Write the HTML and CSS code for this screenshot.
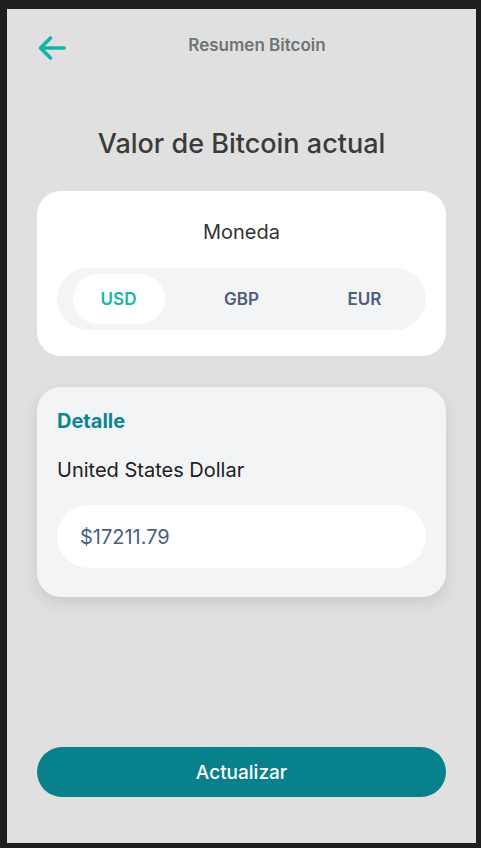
FILE: index.html
```html
<!DOCTYPE html>
<html lang="es">
<head>
	<meta charset="utf-8">
	<title>Resumen Bitcoin</title>
	<link rel="stylesheet" href="styles.css">
</head>
<body>
	<div class="screen">
		<header class="topbar">
			<a class="back" href="#" aria-label="Volver">
				<svg width="28" height="26" viewBox="0 0 28 26" fill="none" stroke="currentColor" stroke-width="3.6" stroke-linecap="round" stroke-linejoin="round">
					<path d="M26 13H3"/>
					<path d="M12.5 3L2.5 13l10 10"/>
				</svg>
			</a>
			<div class="topbar-title">Resumen Bitcoin</div>
		</header>

		<h1>Valor de Bitcoin actual</h1>

		<section class="card currency">
			<div class="card-label">Moneda</div>
			<div class="segment">
				<button class="seg-item active">USD</button>
				<button class="seg-item">GBP</button>
				<button class="seg-item">EUR</button>
			</div>
		</section>

		<section class="card detail">
			<h2>Detalle</h2>
			<p class="currency-name">United States Dollar</p>
			<div class="amount">$17211.79</div>
		</section>

		<div class="spacer"></div>

		<button class="refresh">Actualizar</button>
	</div>
</body>
</html>
```

FILE: styles.css
```css
html, body {
	margin: 0;
	padding: 0;
}

body {
	background-color: #1e1e20;
	font-family: Inter, "Noto Sans", sans-serif;
	padding: 9px 5px 5px 7px;
}

.screen {
	background-color: #e0e0e0;
	height: 834px;
	box-sizing: border-box;
	padding: 24px 30px 46px 30px;
	display: flex;
	flex-direction: column;
}

.topbar {
	display: flex;
	align-items: flex-start;
	height: 30px;
}

.back {
	width: 30px;
	height: 30px;
	display: flex;
	align-items: center;
	color: #13b6a6;
	padding-left: 1px;
}

.topbar-title {
	flex: 1;
	text-align: center;
	font-size: 17px;
	font-weight: 600;
	line-height: 24px;
	color: #6d7477;
}

h1 {
	margin: 65px 0 31px 0;
	text-align: center;
	font-size: 27px;
	font-weight: 500;
	line-height: 32px;
	color: #3b3b3b;
}

.card {
	border-radius: 24px;
	padding: 20px;
}

.currency {
	background-color: #ffffff;
	padding-top: 26px;
	padding-bottom: 26px;
}

.card-label {
	text-align: center;
	font-size: 20px;
	line-height: 30px;
	color: #333333;
	margin-bottom: 21px;
}

.segment {
	display: grid;
	grid-template-columns: 1fr 1fr 1fr;
	background-color: #f3f4f6;
	border-radius: 31px;
	padding: 6px 0;
}

.seg-item {
	justify-self: center;
	width: 92px;
	height: 50px;
	border: none;
	border-radius: 25px;
	background: transparent;
	font-family: inherit;
	font-size: 17px;
	font-weight: 600;
	color: #4a5d7c;
}

.seg-item.active {
	background-color: #ffffff;
	color: #14b8a6;
}

.detail {
	margin-top: 31px;
	background-color: #f3f4f6;
	box-shadow: 0 6px 16px rgba(0, 0, 0, 0.10);
	padding-bottom: 29px;
}

.detail h2 {
	margin: 0;
	font-size: 20px;
	font-weight: 700;
	line-height: 28px;
	color: #0c8791;
}

.currency-name {
	margin: 21px 0 0 0;
	font-size: 20px;
	line-height: 28px;
	color: #202020;
}

.amount {
	margin-top: 21px;
	height: 63px;
	box-sizing: border-box;
	padding: 0 23px;
	display: flex;
	align-items: center;
	background-color: #ffffff;
	border-radius: 32px;
	font-size: 20px;
	color: #4a5f80;
}

.spacer {
	flex: 1;
}

.refresh {
	height: 50px;
	border: none;
	border-radius: 25px;
	background-color: #07818c;
	color: #ffffff;
	font-family: inherit;
	font-size: 19px;
	font-weight: 500;
}
```
